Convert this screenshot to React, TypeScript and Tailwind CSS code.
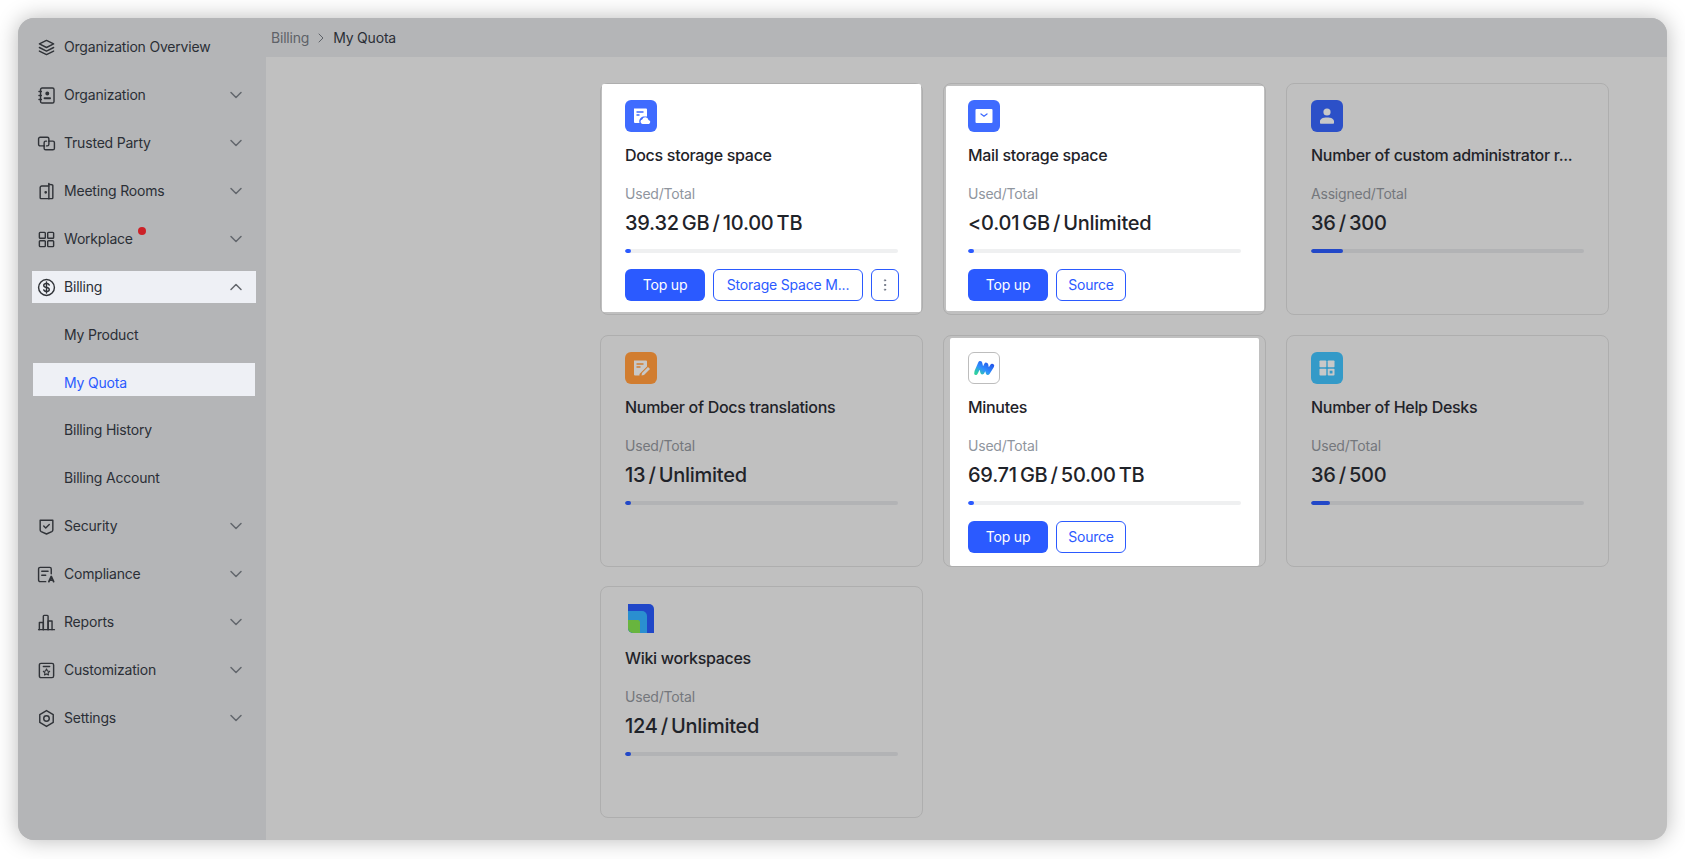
import type { ReactNode } from 'react';
import { ChevronDown, ChevronRight, ChevronUp, EllipsisVertical } from 'lucide-react';

const stroke = {
  fill: 'none',
  stroke: 'currentColor',
  strokeWidth: 1.8,
  strokeLinecap: 'round' as const,
  strokeLinejoin: 'round' as const,
};

const NavIcon = ({ children }: { children: ReactNode }) => (
  <svg viewBox="0 0 24 24" className="h-[19px] w-[19px] shrink-0 text-[#303338]" {...stroke}>
    {children}
  </svg>
);

const icons: Record<string, ReactNode> = {
  overview: (
    <NavIcon>
      <path d="M12 3l9 4.5-9 4.5-9-4.5z" />
      <path d="M3 12l9 4.5 9-4.5" />
      <path d="M3 16.5L12 21l9-4.5" />
    </NavIcon>
  ),
  organization: (
    <NavIcon>
      <rect x="4.5" y="2.5" width="17" height="19" rx="2" />
      <path d="M2.5 7h3M2.5 12h3M2.5 17h3" />
      <circle cx="13" cy="9.5" r="1.6" fill="currentColor" />
      <path d="M9.5 15.5h7" strokeWidth="2.4" />
    </NavIcon>
  ),
  trusted: (
    <NavIcon>
      <path d="M9 15H4a2 2 0 0 1-2-2V6a2 2 0 0 1 2-2h9a2 2 0 0 1 2 2v3" />
      <path d="M15 9h5a2 2 0 0 1 2 2v7a2 2 0 0 1-2 2h-9a2 2 0 0 1-2-2v-3" />
      <path d="M9 15v-4a2 2 0 0 1 2-2h1" />
      <path d="M15 9v4a2 2 0 0 1-2 2h-1" />
    </NavIcon>
  ),
  meeting: (
    <NavIcon>
      <path d="M15 5H6a2 2 0 0 0-2 2v13a1 1 0 0 0 1 1h10" />
      <path d="M15 2v19" />
      <path d="M15 3l4 .5a1 1 0 0 1 1 1V20a1 1 0 0 1-1 1h-4" />
      <circle cx="11" cy="13" r="0.8" fill="currentColor" />
    </NavIcon>
  ),
  workplace: (
    <NavIcon>
      <rect x="3" y="3" width="7.5" height="7.5" rx="1" />
      <rect x="13.5" y="3" width="7.5" height="7.5" rx="1" />
      <rect x="3" y="13.5" width="7.5" height="7.5" rx="1" />
      <rect x="13.5" y="13.5" width="7.5" height="7.5" rx="1" />
    </NavIcon>
  ),
  billing: (
    <NavIcon>
      <circle cx="12" cy="12" r="10" />
      <path d="M15.5 9c-.5-1.300-1.800-2-3.500-2-2 0-3.500 1-3.500 2.500S10 11.700 12 12s3.500 1 3.500 2.500S14 17 12 17c-1.700 0-3-.7-3.500-2" />
      <path d="M12 5v14" />
    </NavIcon>
  ),
  security: (
    <NavIcon>
      <path d="M4 4h16v12.500c0 1-.5 1.600-1.300 2L12 21.500l-6.700-3C4.500 18.100 4 17.500 4 16.500z" />
      <path d="M8.500 11.500l2.500 2.500 4.500-4.500" />
    </NavIcon>
  ),
  compliance: (
    <NavIcon>
      <path d="M11 21H4a2 2 0 0 1-2-2V5a2 2 0 0 1 2-2h12a2 2 0 0 1 2 2v6" />
      <path d="M6 8h8M6 13h5" />
      <path d="M15 21l3-6.500 3 6.500M16 19h4" strokeWidth="2.200" />
    </NavIcon>
  ),
  reports: (
    <NavIcon>
      <path d="M2 21h20" />
      <path d="M3 21v-9h5v9" />
      <path d="M8 21V4a1 1 0 0 1 1-1h4a1 1 0 0 1 1 1v17" />
      <path d="M14 21V10h5v11" />
    </NavIcon>
  ),
  customization: (
    <NavIcon>
      <rect x="3" y="3" width="18" height="18" rx="2" />
      <path d="M8 7h8" />
      <path d="M12 10l1.300 2.600 2.700.4-2 1.900.5 2.700-2.500-1.300-2.500 1.300.5-2.700-2-1.900 2.700-.4z" strokeWidth="1.400" />
    </NavIcon>
  ),
  settings: (
    <NavIcon>
      <path d="M12 2l8.500 5v10L12 22l-8.500-5V7z" />
      <circle cx="12" cy="12" r="3.500" />
    </NavIcon>
  ),
};

const navItems = [
  { key: 'overview', label: 'Organization Overview', chevron: false },
  { key: 'organization', label: 'Organization', chevron: true },
  { key: 'trusted', label: 'Trusted Party', chevron: true },
  { key: 'meeting', label: 'Meeting Rooms', chevron: true },
  { key: 'workplace', label: 'Workplace', chevron: true, dot: true },
];

const navItemsBottom = [
  { key: 'security', label: 'Security' },
  { key: 'compliance', label: 'Compliance' },
  { key: 'reports', label: 'Reports' },
  { key: 'customization', label: 'Customization' },
  { key: 'settings', label: 'Settings' },
];

const IconBox = ({ bg, children }: { bg: string; children: ReactNode }) => (
  <div className={`flex h-8 w-8 items-center justify-center rounded-[6px] ${bg}`}>{children}</div>
);

const DocsIcon = () => (
  <IconBox bg="bg-[#3f6bff]">
    <svg viewBox="0 0 20 20" className="h-5 w-5">
      <path d="M3 2.500h12a1 1 0 0 1 1 1v7H12a5 5 0 0 0-3.500 6.500H4a1 1 0 0 1-1-1z" fill="#fff" />
      <path d="M5.500 6h7M5.500 9h3" stroke="#3f6bff" strokeWidth="1.300" />
      <path d="M11.500 18a2.300 2.300 0 0 1-.3-4.500 3.300 3.300 0 0 1 6.300.4 2.100 2.100 0 0 1 .2 4.100z" fill="#fff" />
    </svg>
  </IconBox>
);

const MailIcon = () => (
  <IconBox bg="bg-[#3f6bff]">
    <svg viewBox="0 0 20 20" className="h-5 w-5">
      <rect x="1.500" y="3" width="17" height="14" rx="1" fill="#fff" />
      <path d="M7 8l3 2.200L13 8" fill="none" stroke="#3f6bff" strokeWidth="1.300" strokeLinecap="round" />
    </svg>
  </IconBox>
);

const AdminIcon = () => (
  <IconBox bg="bg-[#2c50c8]">
    <svg viewBox="0 0 20 20" className="h-5 w-5" fill="#c8c8c8">
      <circle cx="10" cy="6" r="3.600" />
      <path d="M3 15.500c0-2.500 2.500-4 7-4s7 1.500 7 4V17a.8.8 0 0 1-.8.8H3.800A.8.8 0 0 1 3 17z" />
    </svg>
  </IconBox>
);

const TranslateIcon = () => (
  <IconBox bg="bg-[#d17d30]">
    <svg viewBox="0 0 20 20" className="h-5 w-5">
      <path d="M3 2.500h12a1 1 0 0 1 1 1v5L8.500 16v1.500H4a1 1 0 0 1-1-1z" fill="#c8c8c8" />
      <path d="M5.500 6h7M5.500 9h4" stroke="#d17d30" strokeWidth="1.300" />
      <path d="M10.500 17.500l.5-2.500 6-6 2 2-6 6z" fill="#c8c8c8" />
    </svg>
  </IconBox>
);

const HelpDeskIcon = () => (
  <IconBox bg="bg-[#349ac8]">
    <svg viewBox="0 0 20 20" className="h-5 w-5">
      <rect x="2.500" y="2.500" width="6.800" height="6.800" rx="0.800" fill="#c8c8c8" />
      <rect x="10.700" y="2.500" width="6.800" height="6.800" rx="0.800" fill="#c8c8c8" />
      <rect x="2.500" y="10.700" width="6.800" height="6.800" rx="0.800" fill="#c8c8c8" />
      <rect x="10.700" y="10.700" width="6.800" height="6.800" rx="0.800" fill="#c8c8c8" />
      <rect x="12.700" y="12.700" width="2.800" height="2.800" fill="#349ac8" />
    </svg>
  </IconBox>
);

const MinutesIcon = () => (
  <div className="flex h-8 w-8 items-center justify-center rounded-[6px] border border-[#bdbdbd] bg-white">
    <svg viewBox="0 0 24 24" className="h-[26px] w-[26px]">
      <defs>
        <linearGradient id="minutes" x1="0" y1="1" x2="1" y2="0">
          <stop offset="0" stopColor="#2fd0a0" />
          <stop offset="0.4" stopColor="#2f90ff" />
          <stop offset="1" stopColor="#2250e8" />
        </linearGradient>
      </defs>
      <path
        d="M5 15.500L8.500 7.500l2 8.500 3.500-7 1.500 7.500L19.500 10"
        fill="none"
        stroke="url(#minutes)"
        strokeWidth="3.800"
        strokeLinecap="round"
        strokeLinejoin="round"
      />
      <circle cx="4.500" cy="17" r="1.500" fill="#2fd0a0" />
    </svg>
  </div>
);

const WikiIcon = () => (
  <svg viewBox="0 0 32 32" className="h-8 w-8">
    <path d="M3 1h21a5 5 0 0 1 5 5v24H8a5 5 0 0 1-5-5z" fill="#2047c8" />
    <path d="M3 8h14a5 5 0 0 1 5 5v17H8a5 5 0 0 1-5-5z" fill="#2a8fd0" />
    <path d="M3 17h10a2 2 0 0 1 2 2v11H8a5 5 0 0 1-5-5z" fill="#68b53e" />
  </svg>
);

interface Quota {
  title: string;
  label: string;
  value: string;
  fill: string;
  icon: ReactNode;
  white?: string;
  buttons?: 'storage' | 'source';
}

const quotas: Quota[] = [
  {
    title: 'Docs storage space',
    label: 'Used/Total',
    value: '39.32 GB / 10.00 TB',
    fill: 'w-[6px]',
    icon: <DocsIcon />,
    white: 'top-0 left-[1px] right-[1px] bottom-[2px]',
    buttons: 'storage',
  },
  {
    title: 'Mail storage space',
    label: 'Used/Total',
    value: '<0.01 GB / Unlimited',
    fill: 'w-[6px]',
    icon: <MailIcon />,
    white: 'top-[2px] left-[2px] right-[1px] bottom-[3px]',
    buttons: 'source',
  },
  {
    title: 'Number of custom administrator r...',
    label: 'Assigned/Total',
    value: '36 / 300',
    fill: 'w-[32px]',
    icon: <AdminIcon />,
  },
  {
    title: 'Number of Docs translations',
    label: 'Used/Total',
    value: '13 / Unlimited',
    fill: 'w-[6px]',
    icon: <TranslateIcon />,
  },
  {
    title: 'Minutes',
    label: 'Used/Total',
    value: '69.71 GB / 50.00 TB',
    fill: 'w-[6px]',
    icon: <MinutesIcon />,
    white: 'top-[2px] left-[6px] right-[6px] bottom-0',
    buttons: 'source',
  },
  {
    title: 'Number of Help Desks',
    label: 'Used/Total',
    value: '36 / 500',
    fill: 'w-[19px]',
    icon: <HelpDeskIcon />,
  },
  {
    title: 'Wiki workspaces',
    label: 'Used/Total',
    value: '124 / Unlimited',
    fill: 'w-[6px]',
    icon: <WikiIcon />,
  },
];

function NavRow({ icon, label, dot, chevron = true }: { icon: string; label: string; dot?: boolean; chevron?: boolean }) {
  return (
    <div className="flex h-8 items-center pl-[5px] pr-[10px]">
      <span className="mr-[8px] flex w-[19px] justify-center">{icons[icon]}</span>
      <span className="relative">
        {label}
        {dot && <span className="absolute -right-[13px] top-[-2px] h-2 w-2 rounded-full bg-[#cc2127]" />}
      </span>
      {chevron && <ChevronDown className="ml-auto h-5 w-5 text-[#63676d]" strokeWidth={1.800} />}
    </div>
  );
}

function QuotaCard({ quota }: { quota: Quota }) {
  const lit = Boolean(quota.white);
  return (
    <div className="relative h-[232px] w-[323px] rounded-lg border border-[#aeaeae] px-6 pt-[16px]">
      {quota.white && <div className={`absolute rounded-[2px] bg-white ${quota.white}`} />}
      <div className="relative">
        {quota.icon}
        <div className="mt-[11px] text-base leading-6 font-medium tracking-[-0.3px] whitespace-nowrap text-[#1f2329]">{quota.title}</div>
        <div className={`mt-[16px] text-sm leading-[22px] ${lit ? 'text-[#8f959e]' : 'text-[#74777c]'}`}>{quota.label}</div>
        <div className="mt-[4px] text-[20px] leading-7 font-medium tracking-[-0.25px] [word-spacing:-2px] text-[#1f2329]">{quota.value}</div>
        <div className={`mt-[12px] h-1 w-[273px] overflow-hidden rounded-full ${lit ? 'bg-[#eff0f1]' : 'bg-[#b2b3b5]'}`}>
          <div className={`h-1 rounded-full ${quota.fill} ${lit ? 'bg-[#2b5aff]' : 'bg-[#2248c8]'}`} />
        </div>
        {quota.buttons && (
          <div className="mt-[16px] flex w-[275px] gap-2 text-sm">
            <button className="h-8 w-20 rounded-[6px] bg-[#2b5aff] text-white">Top up</button>
            {quota.buttons === 'storage' ? (
              <>
                <button className="h-8 w-[150px] whitespace-nowrap rounded-[6px] border border-[#2b5aff] px-2 text-[#2b5aff]">
                  Storage Space M...
                </button>
                <button className="flex h-8 w-[28px] items-center justify-center rounded-[6px] border border-[#2b5aff] text-[#6a7180]">
                  <EllipsisVertical className="h-4 w-4" strokeWidth={1.500} />
                </button>
              </>
            ) : (
              <button className="h-8 w-[70px] rounded-[6px] border border-[#2b5aff] text-[#2b5aff]">Source</button>
            )}
          </div>
        )}
      </div>
    </div>
  );
}

export default function App() {
  return (
    <div className="h-[859px] w-[1685px] overflow-hidden bg-white p-[18px] font-['Inter',sans-serif] text-sm tracking-[-0.2px] text-[#2b2f36]">
      <div className="flex h-[822px] w-[1649px] overflow-hidden rounded-[16px] bg-[#c0c0c0] shadow-[0_0_22px_rgba(0,0,0,0.28)]">
        {/* Sidebar */}
        <aside className="flex w-[248px] shrink-0 flex-col gap-4 bg-[#b4b5b7] pl-[14px] pr-[10px] pt-[13px]">
          {navItems.map((item) => (
            <NavRow key={item.key} icon={item.key} label={item.label} dot={item.dot} chevron={item.chevron} />
          ))}

          <div className="flex h-8 items-center bg-[#eef0f5] pl-[5px] pr-[10px]">
            <span className="mr-[8px] flex w-[19px] justify-center">{icons.billing}</span>
            <span>Billing</span>
            <ChevronUp className="ml-auto h-5 w-5 text-[#63676d]" strokeWidth={1.800} />
          </div>

          <div className="flex h-8 items-center pl-[32px]">My Product</div>
          <div className="mx-[1px] -mt-[4px] flex h-[33px] items-center bg-[#eef0f5] pl-[31px] pt-[6px] text-[#2b5aff]">My Quota</div>
          <div className="mt-[2px] flex h-8 items-center pl-[32px]">Billing History</div>
          <div className="flex h-8 items-center pl-[32px]">Billing Account</div>

          {navItemsBottom.map((item) => (
            <NavRow key={item.key} icon={item.key} label={item.label} />
          ))}
        </aside>

        {/* Main */}
        <div className="flex min-w-0 flex-1 flex-col">
          <header className="flex h-[39px] shrink-0 items-center bg-[#b4b5b7] pl-[5px]">
            <span className="text-[#5e6268]">Billing</span>
            <ChevronRight className="mx-[4px] h-4 w-4 text-[#5e6268]" strokeWidth={1.500} />
            <span>My Quota</span>
          </header>
          <main className="grid grid-cols-[323px_323px_323px] content-start gap-x-[20px] gap-y-[19.5px] pl-[334px] pt-[26px]">
            {quotas.map((quota) => (
              <QuotaCard key={quota.title} quota={quota} />
            ))}
          </main>
        </div>
      </div>
    </div>
  );
}
